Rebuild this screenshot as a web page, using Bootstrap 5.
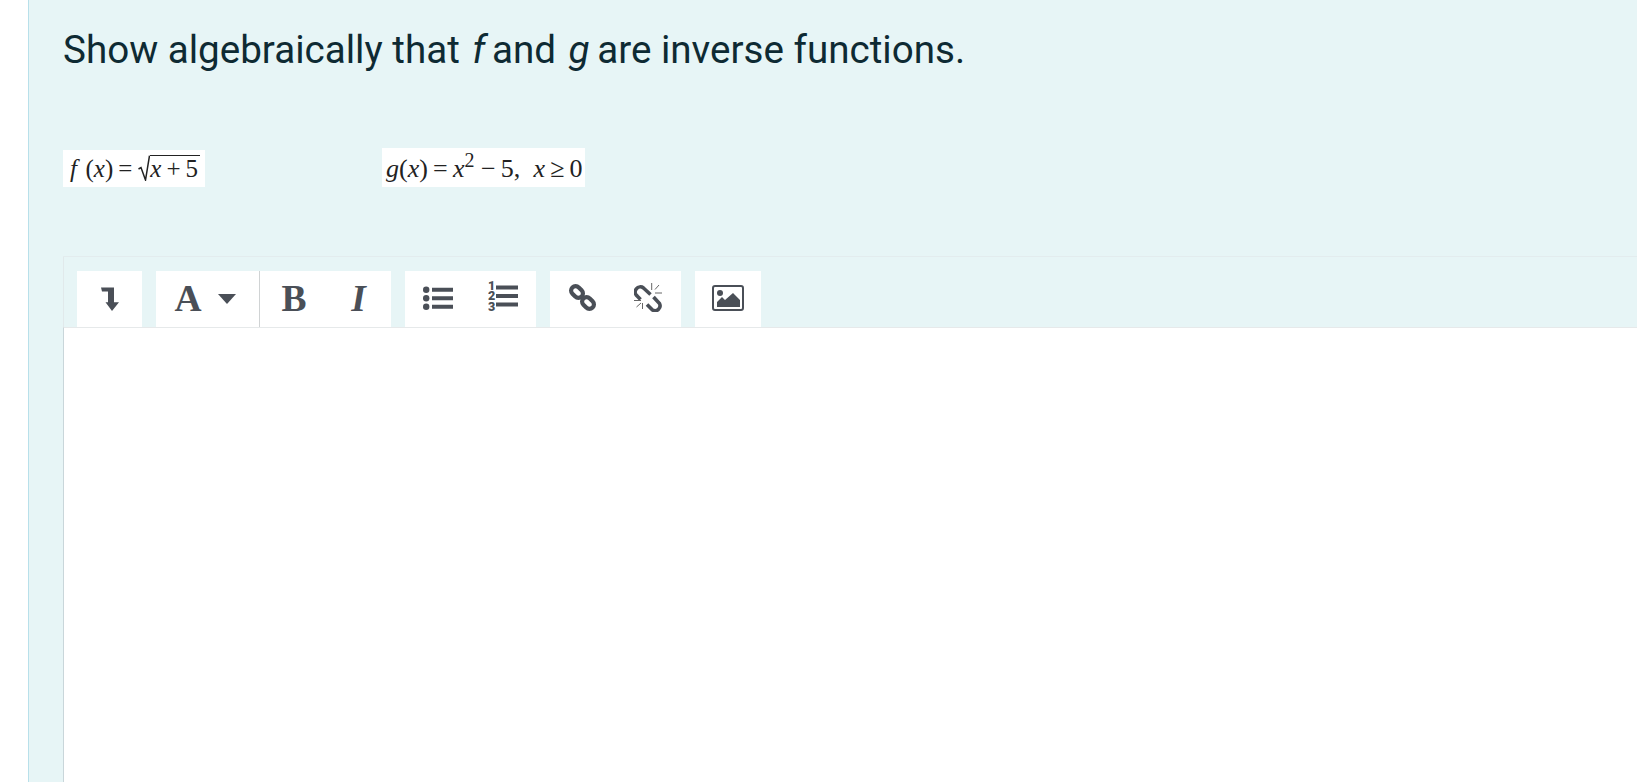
<!DOCTYPE html>
<html lang="en">
<head>
  <meta charset="UTF-8" />
  <meta name="viewport" content="width=device-width, initial-scale=1.0"/>
  <title>Inverse functions</title>
  <link href="https://cdn.jsdelivr.net/npm/bootstrap@5.3.0/dist/css/bootstrap.min.css" rel="stylesheet"/>
  <style>
    html, body { height: 100%; overflow: hidden; background: #fff; }
    .page-wrap { height: 782px; padding-left: 28px; overflow: hidden; }
    .question-panel {
      height: 782px;
      background: #e7f5f6;
      border-left: 1px solid #b8e0ea;
      padding: 0 0 0 34px;
      color: #0e2a33;
    }
    .question-title {
      font-family: Roboto, sans-serif;
      font-size: 38.6px;
      line-height: 46px;
      font-weight: 400;
      margin: 0;
      padding-top: 27px;
    }
    .var-f { margin: 0 -3px 0 3px; }
    .var-g { margin: 0 -2px 0 3px; }
    .math-row { height: 39px; margin-top: 75px; align-items: flex-end; }
    .math-box {
      background: #fff;
      height: 37px;
      font-family: "Liberation Serif", serif;
      color: #222;
      white-space: nowrap;
      display: flex;
      align-items: flex-start;
    }
    .math-f { width: 142px; padding: 3px 0 0 7px; font-size: 25px; line-height: 32px; }
    .math-f .fn-name { margin-right: 8.5px; }
    .math-f .fn-args { margin-right: 6px; }
    .math-g { width: 203px; height: 39px; margin-left: 177px; padding: 4px 0 0 4px; font-size: 26px; line-height: 33px; }
    .math-g sup { font-size: 20px; top: -10px; line-height: 0; position: relative; vertical-align: baseline; }
    .radical { width: 12px; height: 26px; margin-top: 2px; flex: none; }
    .radicand { border-top: 1.5px solid #222; line-height: 25px; margin-top: 2px; padding-right: 2px; height: 26px; }
    .editor-box { margin-top: 69px; border-top: 1px solid #e3ecee; }
    .tool-strip { height: 70px; padding: 14px 0 0 13px; gap: 14px; align-items: stretch; flex-wrap: nowrap; border-left: 1px solid #e1e9eb; }
    .tool-group { display: flex; background: #fff; }
    .tool-btn {
      width: 65.5px;
      height: 56px;
      padding: 0;
      border: 0;
      border-radius: 0;
      background: #fff;
      color: #4a4f57;
      display: flex;
      align-items: center;
      justify-content: center;
      font-family: "Liberation Serif", serif;
      font-size: 37.5px;
      line-height: 1;
    }
    .tool-btn svg { display: block; }
    .tool-first { width: 65px; }
    .icon-up { margin-bottom: 4px; }
    .icon-up-sm { margin-bottom: 2px; }
    .icon-up-num { margin-bottom: 7px; }
    .tool-wide { width: 104px; gap: 16px; border-right: 1px solid #d0d3d4; padding-right: 5px; }
    .tool-b { width: 66px; font-weight: 700; padding-left: 2px; }
    .tool-i { width: 65px; font-style: italic; font-weight: 700; }
    .edit-area { height: 460px; background: #fff; border-top: 1px solid #e6e9ea; border-left: 1px solid #c9d6da; }
  </style>
</head>
<body>
<div class="page-wrap">
  <div class="question-panel">
    <h1 class="question-title">Show algebraically that <i class="var-f">f</i> and <i class="var-g">g</i> are inverse functions.</h1>

    <div class="d-flex math-row">
      <div class="math-box math-f">
        <i class="fn-name">f</i><span class="fn-args">(<i>x</i>)&thinsp;=</span>
        <svg class="radical" viewBox="0 0 12 26"><path d="M0.5 14 L3 12.5 L7.5 25 L11.5 0.7" fill="none" stroke="#222" stroke-width="1.5"/></svg>
        <span class="radicand"><i>x</i>&thinsp;+&thinsp;5</span>
      </div>
      <div class="math-box math-g">
        <span><i>g</i>(<i>x</i>)&thinsp;=&thinsp;<i>x</i><sup>2</sup>&nbsp;−&thinsp;5,&nbsp;&nbsp;<i>x</i>&thinsp;≥&thinsp;0</span>
      </div>
    </div>

    <div class="editor-box">
      <div class="btn-toolbar tool-strip" role="toolbar">
        <div class="tool-group">
          <button type="button" class="btn tool-btn tool-first" aria-label="Indent">
            <svg width="18" height="24" viewBox="0 0 18 24"><path d="M0 0.5H13V15.3H18L11 24L4.5 15.3H7V4.5H1Z" fill="currentColor"/></svg>
          </button>
        </div>
        <div class="tool-group">
          <button type="button" class="btn tool-btn tool-wide">
            <span class="fw-bold">A</span>
            <svg width="18" height="10" viewBox="0 0 18 10"><path d="M0 0H18L9 10Z" fill="currentColor"/></svg>
          </button>
          <button type="button" class="btn tool-btn tool-b">B</button>
          <button type="button" class="btn tool-btn tool-i">I</button>
        </div>
        <div class="tool-group">
          <button type="button" class="btn tool-btn" aria-label="Bullets">
            <svg width="30" height="26" viewBox="0 0 30 26">
              <circle cx="3.2" cy="3.7" r="3.2" fill="currentColor"/><circle cx="3.2" cy="12.2" r="3.2" fill="currentColor"/><circle cx="3.2" cy="20.7" r="3.2" fill="currentColor"/>
              <path d="M9 1.7H30V5.7H9ZM9 10.2H30V14.2H9ZM9 18.7H30V22.7H9Z" fill="currentColor"/>
            </svg>
          </button>
          <button type="button" class="btn tool-btn" aria-label="Numbers">
            <svg class="icon-up-num" width="30" height="35" viewBox="0 -3 30 35">
              <path d="M8 4.5H30V8.5H8ZM8 13H30V17H8ZM8 21.5H30V25.5H8Z" fill="currentColor"/>
              <text font-family="Roboto, sans-serif" font-size="12.5" font-weight="900" fill="currentColor"><tspan x="0" y="8.5">1</tspan><tspan x="0" y="19">2</tspan><tspan x="0" y="29.5">3</tspan></text>
            </svg>
          </button>
        </div>
        <div class="tool-group">
          <button type="button" class="btn tool-btn" aria-label="Link">
            <svg class="icon-up" width="29" height="29" viewBox="0 0 29 29" fill="none" stroke="currentColor" stroke-width="4.2">
              <rect x="-6.5" y="-4.5" width="13" height="9" rx="4.5" transform="translate(9 9) rotate(45)"/>
              <rect x="-6.5" y="-4.5" width="13" height="9" rx="4.5" transform="translate(20 20) rotate(45)"/>
            </svg>
          </button>
          <button type="button" class="btn tool-btn" aria-label="Unlink">
            <svg class="icon-up" width="29" height="29" viewBox="0 -1 29 29" fill="none" stroke="currentColor">
              <path d="M6.5 15.5 L3.2 12 A5 5 0 0 1 9.5 4 L16.5 10.5" stroke-width="3.6"/>
              <path d="M19.5 13 L25.5 19.5 A5 5 0 0 1 18.5 26 L13 20.5" stroke-width="3.6"/>
              <path d="M17.7 -1V6M21 5.5L25 1M21 9H28M0 16.5H7M2.5 23L7 19M8.5 19V25" stroke-width="1" stroke="#666"/>
            </svg>
          </button>
        </div>
        <div class="tool-group">
          <button type="button" class="btn tool-btn" aria-label="Image">
            <svg class="icon-up-sm" width="32" height="26" viewBox="0 0 32 26">
              <rect x="1" y="1" width="30" height="24" rx="2" fill="none" stroke="currentColor" stroke-width="2"/>
              <circle cx="8" cy="8" r="3" fill="currentColor"/>
              <path d="M5 22V17L10 12L13 15L21 8L28 15V22Z" fill="currentColor"/>
            </svg>
          </button>
        </div>
      </div>
      <div class="edit-area"></div>
    </div>
  </div>
</div>
<script src="https://cdn.jsdelivr.net/npm/bootstrap@5.3.0/dist/js/bootstrap.bundle.min.js"></script>
</body>
</html>
